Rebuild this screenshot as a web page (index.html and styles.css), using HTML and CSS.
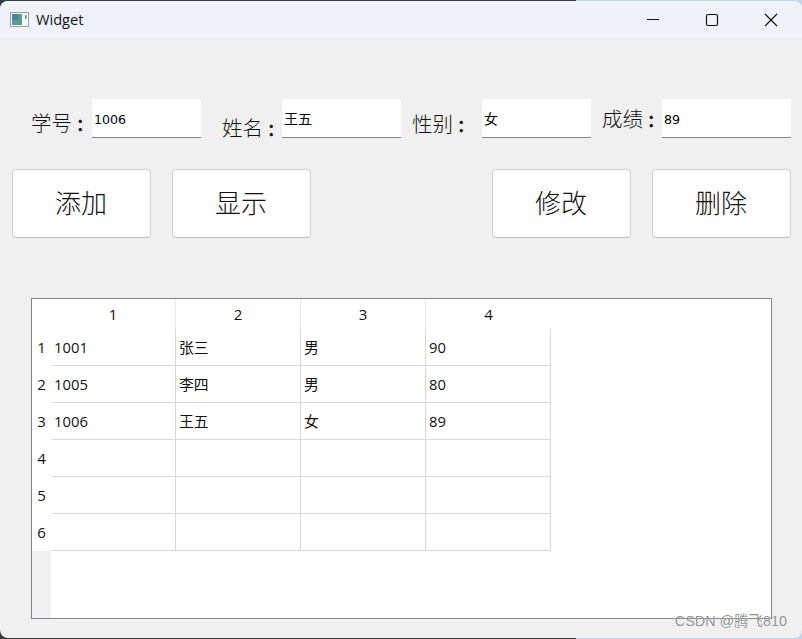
FILE: index.html
```html
<!DOCTYPE html>
<html lang="zh">
<head>
  <meta charset="UTF-8" />
  <meta name="viewport" content="width=device-width, initial-scale=1.0" />
  <title>Widget</title>
  <link rel="stylesheet" href="styles.css">
</head>
<body>
  <div class="window">
    <div class="titlebar">
      <svg class="app-icon" xmlns="http://www.w3.org/2000/svg" viewBox="0 0 20 16">
        <rect x="0.5" y="0.5" width="18" height="14" fill="#f4f6f8" stroke="#9a9fa6"/>
        <rect x="2" y="2" width="10" height="11" fill="#5a9c86"/>
        <rect x="2" y="2" width="6" height="6" fill="#4f7fa6"/>
        <rect x="15" y="3" width="1.5" height="4" fill="#4f8f9c"/>
      </svg>
      <span class="title">Widget</span>
      <div class="controls">
        <svg class="ctl" xmlns="http://www.w3.org/2000/svg" viewBox="0 0 14 14"><path d="M1 6.5h12" /></svg>
        <svg class="ctl" xmlns="http://www.w3.org/2000/svg" viewBox="0 0 14 14"><rect x="1.5" y="1.5" width="11" height="11" rx="1.5" /></svg>
        <svg class="ctl" xmlns="http://www.w3.org/2000/svg" viewBox="0 0 14 14"><path d="M1 1l12 12M13 1L1 13" /></svg>
      </div>
    </div>

    <div class="form-row">
      <label class="lbl lbl-id">学号<span class="colon">：</span></label>
      <div class="field f-id">1006</div>
      <label class="lbl lbl-name">姓名<span class="colon">：</span></label>
      <div class="field f-name cjk">王五</div>
      <label class="lbl lbl-sex">性别<span class="colon">：</span></label>
      <div class="field f-sex cjk">女</div>
      <label class="lbl lbl-score">成绩<span class="colon">：</span></label>
      <div class="field f-score">89</div>
    </div>

    <div class="btn-row">
      <button class="btn">添加</button>
      <button class="btn">显示</button>
      <button class="btn btn-push">修改</button>
      <button class="btn">删除</button>
    </div>

    <div class="table-box">
      <div class="corner-col">
        <div class="row-head head-top"></div>
        <div class="row-head">1</div>
        <div class="row-head">2</div>
        <div class="row-head">3</div>
        <div class="row-head">4</div>
        <div class="row-head">5</div>
        <div class="row-head">6</div>
        <div class="row-rest"></div>
      </div>
      <div class="grid">
        <div class="col-head">1</div>
        <div class="col-head">2</div>
        <div class="col-head">3</div>
        <div class="col-head">4</div>
        <div class="cell">1001</div><div class="cell">张三</div><div class="cell">男</div><div class="cell">90</div>
        <div class="cell">1005</div><div class="cell">李四</div><div class="cell">男</div><div class="cell">80</div>
        <div class="cell">1006</div><div class="cell">王五</div><div class="cell">女</div><div class="cell">89</div>
        <div class="cell"></div><div class="cell"></div><div class="cell"></div><div class="cell"></div>
        <div class="cell"></div><div class="cell"></div><div class="cell"></div><div class="cell"></div>
        <div class="cell"></div><div class="cell"></div><div class="cell"></div><div class="cell"></div>
      </div>
    </div>

    <div class="watermark">CSDN @腾飞810</div>
  </div>
</body>
</html>
```

FILE: styles.css
```css
html, body {
  margin: 0;
  height: 100%;
}
body {
  background: linear-gradient(to right, #3a3a3a 576px, #c3d6e8 576px);
  font-family: "Noto Sans CJK SC", "Liberation Sans", sans-serif;
  color: #000;
  overflow: hidden;
}
.window {
  position: relative;
  width: 802px;
  height: 637px;
  margin-top: 1px;
  background: #f0f0f0;
  border-radius: 8px;
  overflow: hidden;
}

/* title bar */
.titlebar {
  height: 37px;
  background: #eff3f9;
  display: flex;
  align-items: center;
  padding-left: 10px;
  box-sizing: border-box;
}
.app-icon {
  width: 20px;
  height: 16px;
  margin-right: 6px;
}
.title {
  font-family: "Open Sans", "Liberation Sans", sans-serif;
  font-size: 14.6px;
  color: #111;
  margin-bottom: 2px;
}
.controls {
  margin-left: auto;
  display: flex;
  gap: 45px;
  padding-right: 24px;
}
.ctl {
  width: 14px;
  height: 14px;
  fill: none;
  stroke: #111;
  stroke-width: 1.2;
}

/* form */
.form-row {
  display: flex;
  align-items: flex-start;
  padding: 61px 0 0 31px;
  height: 70px;
}
.lbl {
  font-size: 20.5px;
  line-height: 30px;
  color: #111;
  font-weight: 300;
  white-space: nowrap;
}
.colon {
  font-family: "Noto Sans CJK TC", sans-serif;
  font-size: 17px;
  font-weight: 700;
  margin-left: 4px;
}
.lbl-id { width: 61px; margin-top: 8px; }
.lbl-name { width: 60px; margin: 13px 0 0 21px; }
.lbl-sex { width: 70px; margin: 9px 0 0 11px; }
.lbl-score { width: 60px; margin: 4px 0 0 11px; }
.field {
  height: 38px;
  background: #fff;
  border-bottom: 1px solid #848484;
  font-family: "DejaVu Sans", sans-serif;
  font-size: 12.6px;
  line-height: 41px;
  padding-left: 2px;
}
.field.cjk {
  font-family: "Noto Sans CJK SC", sans-serif;
  font-size: 14px;
  line-height: 38px;
}
.f-id { width: 107px; }
.f-name { width: 117px; }
.f-sex { width: 107px; }
.f-score { width: 127px; }

/* buttons */
.btn-row {
  display: flex;
  padding-left: 12px;
  gap: 21px;
}
.btn {
  width: 139px;
  height: 69px;
  background: #fdfdfd;
  border: 1px solid #d0d0d0;
  border-bottom-color: #bdbdbd;
  border-radius: 4px;
  font-family: "Noto Sans CJK SC", sans-serif;
  font-size: 26px;
  font-weight: 300;
  color: #111;
  padding: 0 1px 4px 0;
}
.btn-push { margin-left: 160px; }

/* table */
.table-box {
  display: flex;
  width: 741px;
  height: 321px;
  margin: 60px 0 0 31px;
  background: #fff;
  border: 1px solid #80848c;
  box-sizing: border-box;
  font-family: "Open Sans", "Noto Sans CJK SC", sans-serif;
  font-size: 14.8px;
  color: #111;
}
.corner-col {
  width: 19px;
  display: flex;
  flex-direction: column;
  text-align: center;
}
.row-head {
  height: 37px;
  line-height: 37px;
  font-size: 15px;
}
.head-top { height: 30px; }
.row-rest {
  flex: 1;
  background: #f0f0f0;
}
.grid {
  display: grid;
  grid-template-columns: repeat(4, 125px);
  grid-template-rows: 30px repeat(6, 37px);
  align-self: flex-start;
}
.col-head {
  line-height: 30px;
  font-size: 15px;
  text-align: center;
  border-right: 1px solid #e8e8e8;
  box-sizing: border-box;
}
.col-head:nth-child(4) { border-right: 0; }
.cell {
  line-height: 36px;
  padding-left: 3px;
  border-right: 1px solid #d8d8d8;
  border-bottom: 1px solid #d8d8d8;
  box-sizing: border-box;
}

.watermark {
  position: absolute;
  right: 15px;
  bottom: 8px;
  font-family: "Liberation Sans", "Noto Sans CJK SC", sans-serif;
  font-size: 14.4px;
  color: rgba(110, 110, 110, 0.75);
  text-shadow: 0 0 1px #fff;
}
```
